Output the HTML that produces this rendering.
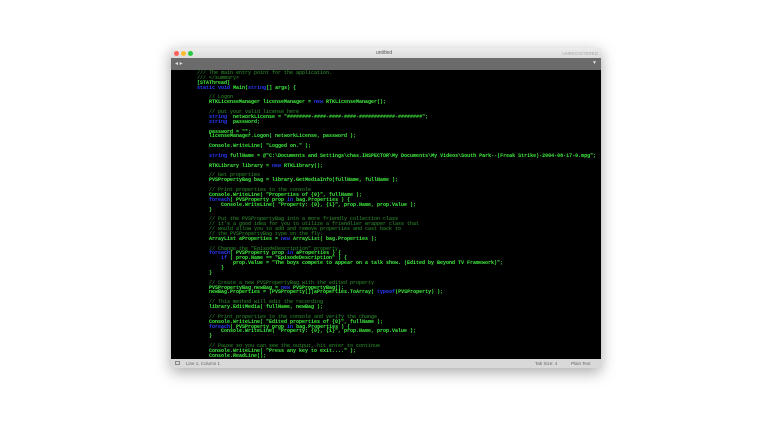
<!DOCTYPE html>
<html><head><meta charset="utf-8"><style>
html,body{margin:0;padding:0;background:#fff;width:760px;height:424px;overflow:hidden}
.win{position:absolute;left:171px;top:48px;width:430px;height:320px;box-shadow:0 4px 14px rgba(0,0,0,.35);background:#000}
.title{position:absolute;left:0;top:0;width:430px;height:10px;background:linear-gradient(#ececec,#dcdcdc);font:5px "Liberation Sans",sans-serif;color:#555}
.dot{position:absolute;top:3px;width:5px;height:5px;border-radius:50%}
.tool{position:absolute;left:0;top:10px;width:430px;height:12px;background:#6b6b6b;color:#ddd;font:6px "Liberation Sans",sans-serif}
.ed{position:absolute;left:0;top:22px;width:430px;height:289px;background:#000;overflow:hidden}
pre{margin:0;padding:1px 0 0 2px;font:bold 5px/4.87px "Liberation Mono",monospace;color:#3ef03e;white-space:pre}
.c{color:#2f9a2f;font-weight:normal}.k{color:#2b3cff}
.st{position:absolute;left:0;top:311px;width:430px;height:9px;background:#d9d9d9;font:4.5px "Liberation Sans",sans-serif;color:#666}
</style></head><body>
<div class="win">
<div class="title">
<div class="dot" style="left:3px;background:#fc5f57"></div>
<div class="dot" style="left:10px;background:#fdbc2e"></div>
<div class="dot" style="left:17px;background:#28c840"></div>
<div style="position:absolute;left:205px;top:2px">untitled</div>
<div style="position:absolute;right:3px;top:2.5px;font-size:4.5px;color:#aaa">UNREGISTERED</div>
</div>
<div class="tool"><span style="position:absolute;left:4px;top:2px">◂ ▸</span><span style="position:absolute;right:4px;top:2px;font-size:5px">▼</span></div>
<div class="ed"><pre><span class="c">        /// The main entry point for the application.
        /// &lt;/summary&gt;</span>
        [STAThread]
        <span class="k">static void</span> Main(<span class="k">string</span>[] args) {

            <span class="c">// Logon</span>
            RTKLicenseManager licenseManager = <span class="k">new</span> RTKLicenseManager();

            <span class="c">// put your valid license here</span>
            <span class="k">string</span>  networkLicense = "########-####-####-####-############-########";
            <span class="k">string</span>  password;

            password = "";
            licenseManager.Logon( networkLicense, password );

            Console.WriteLine( "Logged on." );

            <span class="k">string</span> fullName = @"C:\Documents and Settings\chas.INSPECTOR\My Documents\My Videos\South Park--(Freak Strike)-2004-08-17-0.mpg";

            RTKLibrary library = <span class="k">new</span> RTKLibrary();

            <span class="c">// Get properties</span>
            PVSPropertyBag bag = library.GetMediaInfo(fullName, fullName );

            <span class="c">// Print properties to the console</span>
            Console.WriteLine( "Properties of {0}", fullName );
            <span class="k">foreach</span>( PVSProperty prop <span class="k">in</span> bag.Properties ) {
                Console.WriteLine( "Property: {0}, {1}", prop.Name, prop.Value );
            }

            <span class="c">// Put the PVSPropertyBag into a more friendly collection class
            // it's a good idea for you to utilize a friendlier wrapper class that
            // would allow you to add and remove properties and cast back to
            // the PVSPropertyBag type on the fly.</span>
            ArrayList aProperties = <span class="k">new</span> ArrayList( bag.Properties );

            <span class="c">// Change the "EpisodeDescription" property</span>
            <span class="k">foreach</span>( PVSProperty prop <span class="k">in</span> aProperties ) {
                <span class="k">if</span> ( prop.Name == "EpisodeDescription" ) {
                    prop.Value = "The boys compete to appear on a talk show. (Edited by Beyond TV Framework)";
                }
            }

            <span class="c">// Create a new PVSPropertyBag with the edited property</span>
            PVSPropertyBag newBag = <span class="k">new</span> PVSPropertyBag();
            newBag.Properties = (PVSProperty[])aProperties.ToArray( <span class="k">typeof</span>(PVSProperty) );

            <span class="c">// This method will edit the recording</span>
            library.EditMedia( fullName, newBag );

            <span class="c">// Print properties to the console and verify the change</span>
            Console.WriteLine( "Edited properties of {0}", fullName );
            <span class="k">foreach</span>( PVSProperty prop <span class="k">in</span> bag.Properties ) {
                Console.WriteLine( "Property: {0}, {1}", prop.Name, prop.Value );
            }

            <span class="c">// Pause so you can see the output, hit enter to continue</span>
            Console.WriteLine( "Press any key to exit...." );
            Console.ReadLine();</pre></div>
<div class="st">
<span style="position:absolute;left:4px;top:2px;width:5px;height:4px;border:0.7px solid #888;box-sizing:border-box"></span>
<span style="position:absolute;left:15px;top:2px">Line 1, Column 1</span>
<span style="position:absolute;left:364px;top:2px">Tab Size: 4</span>
<span style="position:absolute;left:400px;top:2px">Plain Text</span>
</div>
</div>
</body></html>
